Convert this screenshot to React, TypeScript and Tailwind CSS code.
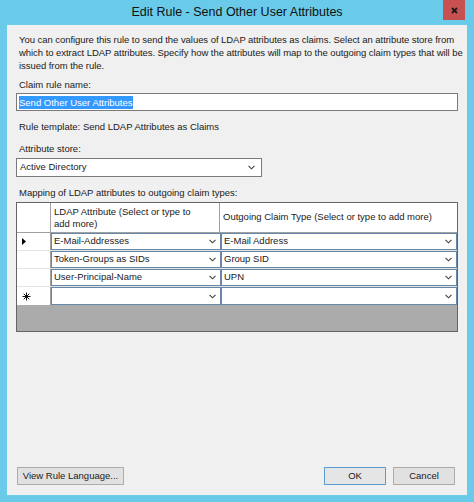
import React from 'react';

const Chevron: React.FC = () => (
  <svg width="7" height="5" viewBox="0 0 7 5" className="shrink-0">
    <polyline points="0.5,0.8 3.5,3.8 6.5,0.8" fill="none" stroke="#404040" strokeWidth="1.1" />
  </svg>
);

const ComboCell: React.FC<{ value: string; className?: string }> = ({ value, className = '' }) => (
  <div className={`flex items-center h-full border border-[#6688a8] bg-white pl-[2px] pr-[4px] ${className}`}>
    <span className="flex-1 truncate">{value}</span>
    <Chevron />
  </div>
);

const rows = [
  { ldap: 'E-Mail-Addresses', claim: 'E-Mail Address', current: true },
  { ldap: 'Token-Groups as SIDs', claim: 'Group SID', current: false },
  { ldap: 'User-Principal-Name', claim: 'UPN', current: false },
];

const App: React.FC = () => {
  return (
    <div
      className="w-[474px] h-[502px] bg-[#69cbe9] flex flex-col text-[9.5px] text-[#1a1a1a] overflow-hidden"
      style={{ fontFamily: '"Liberation Sans", Arial, sans-serif' }}
    >
      {/* Title bar */}
      <div className="relative h-[25px] shrink-0 flex items-center justify-center">
        <span className="text-[12.5px] text-[#111] leading-none">Edit Rule - Send Other User Attributes</span>
        <div className="absolute right-[9px] top-0 w-[22px] h-[20px] bg-[#c75050] flex items-center justify-center">
          <svg width="7" height="7" viewBox="0 0 7 7">
            <path d="M1 1 L6 6 M6 1 L1 6" stroke="#1a1a1a" strokeWidth="1.8" />
          </svg>
        </div>
      </div>

      {/* Client area */}
      <div className="flex-1 mx-[7px] mb-[7px] bg-[#f0f0f0] px-[9px] pt-[8px] flex flex-col">
        <p className="leading-[13px] pl-[3px] whitespace-nowrap tracking-[-0.05px]">
          You can configure this rule to send the values of LDAP attributes as claims. Select an attribute store from
          <br />
          which to extract LDAP attributes. Specify how the attributes will map to the outgoing claim types that will be
          <br />
          issued from the rule.
        </p>

        <label className="mt-[6px] leading-[13px] pl-[3px]">Claim rule name:</label>
        <div className="mt-[2px] h-[18px] border border-[#7a7a7a] bg-white flex items-center px-[2px]">
          <span className="bg-[#3399ff] text-white leading-[13px]">Send Other User Attributes</span>
        </div>

        <div className="mt-[9px] leading-[13px] pl-[3px]">Rule template: Send LDAP Attributes as Claims</div>

        <label className="mt-[9px] leading-[13px] pl-[3px]">Attribute store:</label>
        <div className="mt-[3px] w-[246px] h-[19px] border border-[#7a7a7a] bg-white flex items-center pl-[3px] pr-[6px]">
          <span className="flex-1">Active Directory</span>
          <Chevron />
        </div>

        <label className="mt-[9px] leading-[13px] pl-[3px]">Mapping of LDAP attributes to outgoing claim types:</label>

        {/* Grid */}
        <div className="mt-[3px] h-[130px] border border-[#646464] bg-[#ababab] flex flex-col">
          <div className="flex h-[30px] bg-white border-b border-[#a0a0a0]">
            <div className="w-[34px] border-r border-[#a0a0a0]" />
            <div className="w-[169px] border-r border-[#a0a0a0] pl-[3px] pt-[3px] leading-[12px]">
              LDAP Attribute (Select or type to
              <br />
              add more)
            </div>
            <div className="flex-1 pl-[3px] flex items-center">Outgoing Claim Type (Select or type to add more)</div>
          </div>

          {rows.map((r) => (
            <div key={r.ldap} className="flex h-[18px] bg-white border-b border-[#e3e3e3]">
              <div className="w-[34px] border-r border-[#a0a0a0] flex items-center pl-[5px] bg-white">
                {r.current && (
                  <svg width="4" height="7" viewBox="0 0 4 7">
                    <path d="M0 0 L4 3.5 L0 7 Z" fill="#000" />
                  </svg>
                )}
              </div>
              <ComboCell value={r.ldap} className="w-[170px]" />
              <ComboCell value={r.claim} className="flex-1" />
            </div>
          ))}

          <div className="flex h-[18px] bg-white">
            <div className="w-[34px] border-r border-[#a0a0a0] flex items-center pl-[5px]">
              <svg width="9" height="9" viewBox="0 0 9 9">
                <path d="M4.5 0.5 V8.5 M0.5 4.5 H8.5 M1.7 1.7 L7.3 7.3 M7.3 1.7 L1.7 7.3" stroke="#111" strokeWidth="1" />
              </svg>
            </div>
            <ComboCell value="" className="w-[170px]" />
            <ComboCell value="" className="flex-1" />
          </div>
        </div>

        <div className="flex-1" />

        {/* Buttons */}
        <div className="flex items-center mb-[10px] pl-[1px] pr-[3px]">
          <button className="h-[18px] w-[107px] border border-[#adadad] bg-[#e1e1e1] leading-none">
            View Rule Language...
          </button>
          <div className="flex-1" />
          <button className="h-[18px] w-[62px] border border-[#5b9bd0] bg-[#e5e5e5] leading-none">OK</button>
          <button className="ml-[7px] h-[18px] w-[62px] border border-[#adadad] bg-[#e1e1e1] leading-none">Cancel</button>
        </div>
      </div>
    </div>
  );
};

export default App;
